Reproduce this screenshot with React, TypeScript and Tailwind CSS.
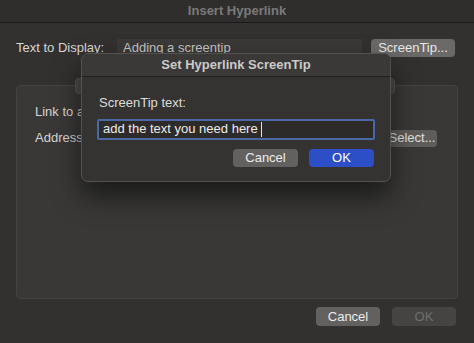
export default function App() {
  return (
    <div className="relative w-[474px] h-[343px] overflow-hidden bg-[#323130] font-['Liberation_Sans',Arial,sans-serif] text-[13px] text-[#d6d5d4]">
      {/* Title bar */}
      <div className="h-[23px] border-b border-[#1c1b1b] bg-[#2f2e2d] flex items-center justify-center">
        <span className="font-bold text-[#7b7a79]">Insert Hyperlink</span>
      </div>

      {/* Text to display row */}
      <div className="flex items-center mt-[16px] pl-[16px] pr-[19px] h-[18px]">
        <span className="w-[101px] shrink-0">Text to Display:</span>
        <div className="w-[245px] h-[18px] bg-[#3a3938] flex items-center pl-[6px] text-[#c4c3c2]">
          Adding a screentip
        </div>
        <button className="ml-auto w-[84px] h-[18px] rounded-[4px] bg-[#6a6968] text-[#e8e8e8] flex items-center justify-center">
          ScreenTip...
        </button>
      </div>

      {/* Group box */}
      <div className="relative mx-[16px] mt-[28px] h-[214px] rounded-[4px] border border-[#444342] bg-[#393837]">
        {/* segmented tabs, mostly hidden by the sheet */}
        <div className="absolute left-[58px] -top-[8px] w-[320px] h-[16px] rounded-[4px] bg-[#4a4948] border border-[#555453]" />
        <div className="pt-[16px] pl-[18px] flex flex-col gap-[8px]">
          <span>Link to a</span>
          <div className="flex items-center h-[17px]">
            <span className="w-[80px]">Address:</span>
            <div className="w-[266px] h-[17px] bg-[#2d2c2b]" />
            <button className="ml-[6px] w-[50px] h-[17px] rounded-[4px] bg-[#5e5d5c] text-[#e0e0e0] flex items-center justify-center">
              Select...
            </button>
          </div>
        </div>
      </div>

      {/* Bottom buttons */}
      <div className="flex justify-end gap-[12px] pr-[18px] mt-[8px]">
        <button className="w-[64px] h-[19px] rounded-[4px] bg-[#626160] text-[#ececec] flex items-center justify-center">
          Cancel
        </button>
        <button className="w-[64px] h-[19px] rounded-[4px] bg-[#454443] text-[#6f6e6d] flex items-center justify-center">
          OK
        </button>
      </div>

      {/* ScreenTip sheet */}
      <div className="absolute left-[81px] top-[53px] w-[310px] h-[129px] rounded-[7px] border border-[#535251] bg-[#343332] shadow-[0_14px_28px_rgba(0,0,0,0.55)] overflow-hidden">
        <div className="h-[23px] border-b border-[#1f1e1e] bg-[#3a3938] flex items-center justify-center">
          <span className="font-bold text-[#cbcac9]">Set Hyperlink ScreenTip</span>
        </div>
        <div className="px-[15px] pt-[16px]">
          <div className="pl-[2px] text-[#dedddc]">ScreenTip text:</div>
          <div className="mt-[6px] h-[21px] rounded-[2px] border-[2px] border-[#4a68a6] bg-[#2c2b2a] flex items-center pl-[4px] text-[13px] text-[#ecebea]">
            add the text you need here
            <span className="ml-[3px] w-[1px] h-[15px] bg-[#e6e6e6]" />
          </div>
          <div className="flex justify-end gap-[11px] mt-[9px] pr-[1px]">
            <button className="w-[65px] h-[18px] rounded-[4px] bg-[#626160] text-[#ececec] flex items-center justify-center">
              Cancel
            </button>
            <button className="w-[65px] h-[18px] rounded-[4px] bg-[#2c4ec6] text-white flex items-center justify-center">
              OK
            </button>
          </div>
        </div>
      </div>
    </div>
  );
}
